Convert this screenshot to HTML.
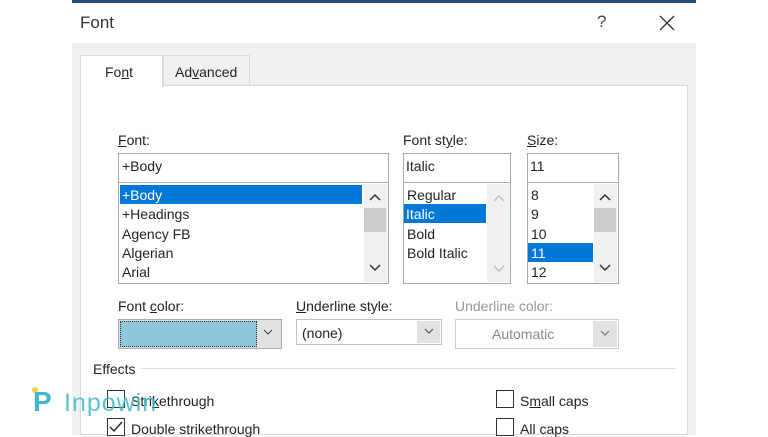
<!DOCTYPE html>
<html><head><style>
*{margin:0;padding:0;box-sizing:border-box}
body{width:768px;height:435px;overflow:hidden;background:#fff;font-family:"Liberation Sans",sans-serif;color:#222;position:relative}
.a{position:absolute}
.t{font-size:14px;white-space:nowrap}
.box{border:1px solid #a8a8a8;background:#fff}
.sel{background:#0078d7;color:#fff}
.sb{background:#f0f0f0}
.cb{width:18px;height:18px;border:1px solid #333;background:#fff}
</style></head><body>
<div class="a" style="left:72px;top:0;width:624px;height:3px;background:#2b4c7e"></div>
<div class="a" style="left:72px;top:3px;width:624px;height:40px;background:#fff"></div>
<div class="a t" style="left:80px;top:13px;font-size:17px;color:#333">Font</div>
<div class="a t" style="left:597px;top:12px;font-size:17px;color:#444">?</div>
<svg class="a" style="left:659px;top:15px" width="16" height="16"><path d="M1 1L15 15M15 1L1 15" stroke="#333" stroke-width="1.3"/></svg>
<div class="a" style="left:72px;top:43px;width:624px;height:392px;background:#f0f0f0"></div>
<div class="a" style="left:163px;top:55px;width:87px;height:31px;background:#f0f0f0;border:1px solid #d9d9d9"></div>
<div class="a t" style="left:175px;top:64px">Ad<u>v</u>anced</div>
<div class="a" style="left:80px;top:85px;width:608px;height:350px;background:#fff;border:1px solid #d9d9d9"></div>
<div class="a" style="left:80px;top:55px;width:83px;height:33px;background:#fff;border:1px solid #d9d9d9;border-bottom:none"></div>
<div class="a t" style="left:105px;top:64px">Fo<u>n</u>t</div>

<div class="a t" style="left:118px;top:132px"><u>F</u>ont:</div>
<div class="a t" style="left:403px;top:132px">Font st<u>y</u>le:</div>
<div class="a t" style="left:527px;top:132px"><u>S</u>ize:</div>

<div class="a box" style="left:118px;top:153px;width:271px;height:30px"></div>
<div class="a t" style="left:122px;top:158px">+Body</div>
<div class="a box" style="left:118px;top:182px;width:271px;height:102px"></div>
<div class="a sel" style="left:120px;top:185px;width:242px;height:19px"></div>
<div class="a t" style="left:122px;top:187px;color:#fff">+Body</div>
<div class="a t" style="left:122px;top:206px">+Headings</div>
<div class="a t" style="left:122px;top:226px">Agency FB</div>
<div class="a t" style="left:122px;top:245px">Algerian</div>
<div class="a t" style="left:122px;top:264px">Arial</div>
<div class="a sb" style="left:364px;top:184px;width:23px;height:98px"></div>
<div class="a" style="left:364px;top:208px;width:22px;height:24px;background:#cdcdcd"></div>
<svg class="a" style="left:369px;top:193px" width="12" height="8"><path d="M1 7L6 2L11 7" stroke="#333" stroke-width="1.5" fill="none"/></svg>
<svg class="a" style="left:369px;top:264px" width="12" height="8"><path d="M1 1L6 6L11 1" stroke="#333" stroke-width="1.5" fill="none"/></svg>

<div class="a box" style="left:403px;top:153px;width:108px;height:30px"></div>
<div class="a t" style="left:406px;top:158px">Italic</div>
<div class="a box" style="left:403px;top:182px;width:108px;height:102px"></div>
<div class="a t" style="left:407px;top:187px">Regular</div>
<div class="a sel" style="left:404px;top:204px;width:82px;height:19px"></div>
<div class="a t" style="left:406px;top:206px;color:#fff">Italic</div>
<div class="a t" style="left:407px;top:226px">Bold</div>
<div class="a t" style="left:407px;top:245px">Bold Italic</div>
<div class="a sb" style="left:487px;top:184px;width:23px;height:98px"></div>
<svg class="a" style="left:493px;top:194px" width="12" height="8"><path d="M1 7L6 2L11 7" stroke="#bbb" stroke-width="1.3" fill="none"/></svg>
<svg class="a" style="left:493px;top:265px" width="12" height="8"><path d="M1 1L6 6L11 1" stroke="#bbb" stroke-width="1.3" fill="none"/></svg>

<div class="a box" style="left:527px;top:153px;width:92px;height:30px"></div>
<div class="a t" style="left:530px;top:158px">11</div>
<div class="a box" style="left:527px;top:182px;width:92px;height:102px"></div>
<div class="a t" style="left:531px;top:187px">8</div>
<div class="a t" style="left:531px;top:206px">9</div>
<div class="a t" style="left:531px;top:226px">10</div>
<div class="a sel" style="left:528px;top:243px;width:65px;height:19px"></div>
<div class="a t" style="left:531px;top:245px;color:#fff">11</div>
<div class="a t" style="left:531px;top:264px">12</div>
<div class="a sb" style="left:594px;top:184px;width:23px;height:98px"></div>
<div class="a" style="left:594px;top:208px;width:22px;height:24px;background:#cdcdcd"></div>
<svg class="a" style="left:599px;top:193px" width="12" height="8"><path d="M1 7L6 2L11 7" stroke="#333" stroke-width="1.5" fill="none"/></svg>
<svg class="a" style="left:599px;top:264px" width="12" height="8"><path d="M1 1L6 6L11 1" stroke="#333" stroke-width="1.5" fill="none"/></svg>

<div class="a t" style="left:118px;top:298px">Font <u>c</u>olor:</div>
<div class="a t" style="left:296px;top:298px"><u>U</u>nderline style:</div>
<div class="a t" style="left:455px;top:298px;color:#999">Underline color:</div>

<div class="a" style="left:118px;top:319px;width:164px;height:30px;background:#e1e1e1;border:1px solid #adadad"></div>
<div class="a" style="left:120px;top:321px;width:137px;height:26px;background:#8ec8da;border:1px dotted #333"></div>
<svg class="a" style="left:263px;top:329px" width="10" height="6"><path d="M1 1L5 5L9 1" stroke="#555" stroke-width="1.2" fill="none"/></svg>
<div class="a box" style="left:296px;top:319px;width:146px;height:26px;border-color:#c4c4c4"></div>
<div class="a t" style="left:302px;top:325px">(none)</div>
<div class="a" style="left:417px;top:321px;width:23px;height:22px;background:#e1e1e1"></div>
<svg class="a" style="left:424px;top:328px" width="10" height="6"><path d="M1 1L5 5L9 1" stroke="#555" stroke-width="1.2" fill="none"/></svg>
<div class="a box" style="left:455px;top:319px;width:164px;height:30px;border-color:#ccc"></div>
<div class="a t" style="left:492px;top:326px;color:#888">Automatic</div>
<div class="a" style="left:593px;top:321px;width:24px;height:26px;background:#e1e1e1"></div>
<svg class="a" style="left:600px;top:330px" width="10" height="6"><path d="M1 1L5 5L9 1" stroke="#777" stroke-width="1.2" fill="none"/></svg>

<div class="a t" style="left:93px;top:361px">Effects</div>
<div class="a" style="left:141px;top:368px;width:535px;height:1px;background:#ddd"></div>

<div class="a cb" style="left:107px;top:390px"></div>
<div class="a t" style="left:131px;top:393px">Stri<u>k</u>ethrough</div>
<div class="a cb" style="left:107px;top:418px"></div>
<svg class="a" style="left:109px;top:420px" width="14" height="14"><path d="M1 7L5 11L13 2" stroke="#222" stroke-width="1.4" fill="none"/></svg>
<div class="a t" style="left:131px;top:421px">Double strikethrough</div>
<div class="a cb" style="left:496px;top:390px"></div>
<div class="a t" style="left:520px;top:393px">S<u>m</u>all caps</div>
<div class="a cb" style="left:496px;top:418px"></div>
<div class="a t" style="left:520px;top:421px">All caps</div>

<div class="a" style="left:32px;top:387px;width:6px;height:6px;border-radius:3px;background:#f3d34a"></div>
<div class="a t" style="left:33px;top:386px;font-size:28px;font-weight:bold;color:#3fb8c8">P</div>
<div class="a t" style="left:64px;top:389px;font-size:25px;color:#3fb8c8;opacity:.85;letter-spacing:1px">Inpowin</div>
</body></html>
